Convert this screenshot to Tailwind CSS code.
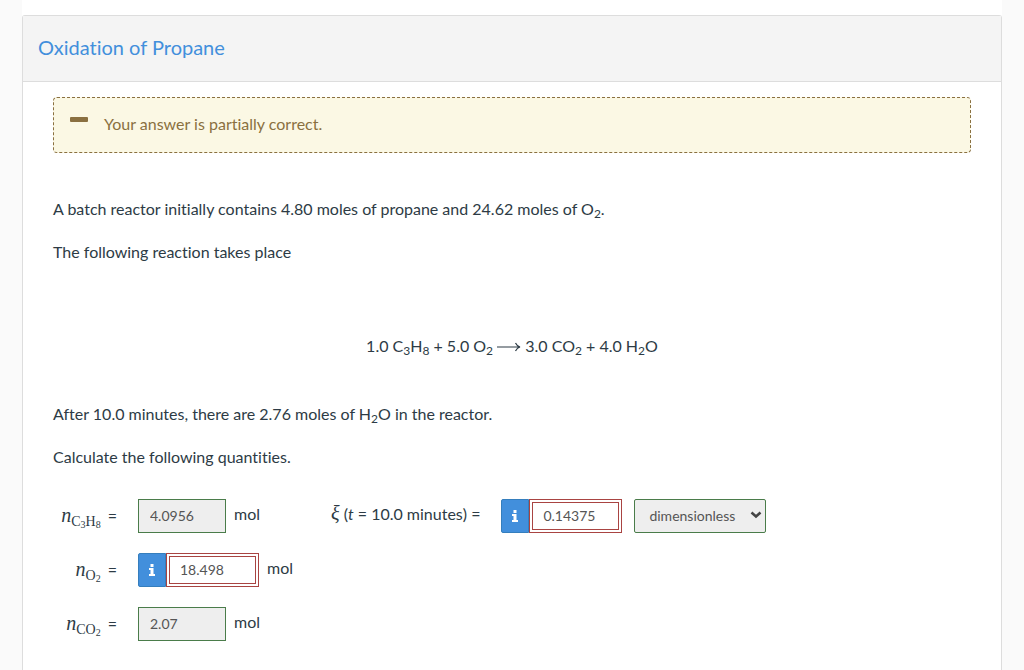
<!DOCTYPE html>
<html lang="en">
  <head>
    <meta charset="UTF-8" />
    <meta name="viewport" content="width=device-width, initial-scale=1.0" />
    <title>Oxidation of Propane</title>
    <script src="https://cdn.jsdelivr.net/npm/@tailwindcss/browser@4"></script>
  </head>

  <body class="bg-[#fafafa] font-[Lato,sans-serif] text-base leading-[27px] text-[#2d3b45] [font-variant-ligatures:none]">
    <main class="mx-[22px] min-h-screen bg-white pt-[15px]">
      <section class="min-h-[calc(100vh-15px)] rounded-t-[3px] border border-b-0 border-[#ddd]">
        <header class="border-b border-[#ddd] bg-[#f4f4f4] px-[15px] pt-[18px] pb-5">
          <h1 class="text-xl leading-[27px] text-[#428fdc]">Oxidation of Propane</h1>
        </header>

        <div class="px-[30px] pt-[15px]">
          <!-- Result banner -->
          <div role="status" class="flex items-center gap-4 rounded-[4px] border border-dashed border-[#8a7040] bg-[#fbf8e4] px-4 pt-3 pb-[15px] text-[#8a7040]">
            <svg class="h-5 w-[18px] -mt-2" viewBox="0 0 18 20" aria-hidden="true">
              <rect x="0" y="7" width="18" height="5" rx="1" fill="currentColor" />
            </svg>
            <span>Your answer is partially correct.</span>
          </div>

          <!-- Problem text -->
          <div class="mt-[42px] space-y-4">
            <p>A batch reactor initially contains 4.80 moles of propane and 24.62 moles of O<sub>2</sub>.</p>
            <p>The following reaction takes place</p>
          </div>

          <p class="mt-[67px] mb-[41px] text-center">
            1.0 C<sub>3</sub>H<sub>8</sub> + 5.0 O<sub>2</sub>
            <svg class="inline-block h-3 w-6 align-[-1px]" viewBox="0 0 24 12" fill="none" stroke="currentColor" stroke-width="1.2" aria-label="yields">
              <path d="M0 6H23M18.500 2C19.500 4 21 5.500 23 6C21 6.500 19.500 8 18.500 10" />
            </svg>
            3.0 CO<sub>2</sub> + 4.0 H<sub>2</sub>O
          </p>

          <div class="space-y-4">
            <p>After 10.0 minutes, there are 2.76 moles of H<sub>2</sub>O in the reactor.</p>
            <p>Calculate the following quantities.</p>
          </div>

          <!-- Answers -->
          <div class="mt-[29px] flex items-start">
            <div class="grid grid-cols-[64px_auto] items-center gap-x-[21px] gap-y-5">
              <label for="propane" class="flex items-baseline justify-end gap-[7px] whitespace-nowrap">
                <span class="font-['Liberation_Serif',serif]"><i class="text-xl leading-[27px]">n</i><sub class="text-sm">C<sub class="text-[10px]">3</sub>H<sub class="text-[10px]">8</sub></sub></span>
                <span>=</span>
              </label>
              <div class="flex items-start gap-2">
                <input id="propane" value="4.0956" readonly class="h-[34px] w-[88px] border border-[#4a7c4a] bg-[#eee] px-[11px] pb-[2px] text-sm text-[#555] outline-none" />
                <span class="pt-px">mol</span>
              </div>

              <label for="oxygen" class="flex items-baseline justify-end gap-[7px] whitespace-nowrap">
                <span class="font-['Liberation_Serif',serif]"><i class="text-xl leading-[27px]">n</i><sub class="text-sm">O<sub class="text-[10px]">2</sub></sub></span>
                <span>=</span>
              </label>
              <div class="flex items-start gap-2">
                <div class="flex">
                  <button type="button" aria-label="Feedback" class="flex h-[34px] w-7 items-center justify-center rounded-l-[2px] border border-[#357ebd] bg-[#428fdc] text-white">
                    <svg class="h-3 w-[6px]" viewBox="0 0 6 12" fill="currentColor"><path d="M1.500 0H4.500V3H1.500ZM0 4H4.500V10H6V12H0V10H1.500V6H0Z" /></svg>
                  </button>
                  <input id="oxygen" value="18.498" readonly class="h-[34px] w-[93px] border-4 border-double border-[#a94442] bg-white px-[10px] pb-[2px] text-sm text-[#555] outline-none" />
                </div>
                <span class="pt-px">mol</span>
              </div>

              <label for="dioxide" class="flex items-baseline justify-end gap-[7px] whitespace-nowrap">
                <span class="font-['Liberation_Serif',serif]"><i class="text-xl leading-[27px]">n</i><sub class="text-sm">CO<sub class="text-[10px]">2</sub></sub></span>
                <span>=</span>
              </label>
              <div class="flex items-start gap-2">
                <input id="dioxide" value="2.07" readonly class="h-[34px] w-[88px] border border-[#4a7c4a] bg-[#eee] px-[11px] pb-[2px] text-sm text-[#555] outline-none" />
                <span class="pt-px">mol</span>
              </div>
            </div>

            <div class="ml-[38px] flex items-start">
              <label for="extent" class="mr-[21px] pt-px whitespace-nowrap"><i class="font-['Liberation_Serif',serif] text-xl leading-[27px]">ξ</i> (<i>t</i> = 10.0 minutes) =</label>
              <button type="button" aria-label="Feedback" class="flex h-[34px] w-7 items-center justify-center rounded-l-[2px] border border-[#357ebd] bg-[#428fdc] text-white">
                <svg class="h-3 w-[6px]" viewBox="0 0 6 12" fill="currentColor"><path d="M1.500 0H4.500V3H1.500ZM0 4H4.500V10H6V12H0V10H1.500V6H0Z" /></svg>
              </button>
              <input id="extent" value="0.14375" readonly class="h-[34px] w-[93px] border-4 border-double border-[#a94442] bg-white px-[10px] pb-[2px] text-sm text-[#555] outline-none" />
              <div class="relative ml-3">
                <select aria-label="Unit" class="h-[34px] w-[132px] appearance-none rounded-[2px] border border-[#4a7c4a] bg-[#eee] pl-[14px] text-sm text-[#555] outline-none">
                  <option>dimensionless</option>
                </select>
                <svg class="pointer-events-none absolute top-3 right-1 h-2 w-3" viewBox="0 0 12 8" fill="none" stroke="#444" stroke-width="2.500" aria-hidden="true"><path d="M1.500 1.500L6 5.500L10.500 1.500" /></svg>
              </div>
            </div>
          </div>
        </div>
      </section>
    </main>
  </body>
</html>
